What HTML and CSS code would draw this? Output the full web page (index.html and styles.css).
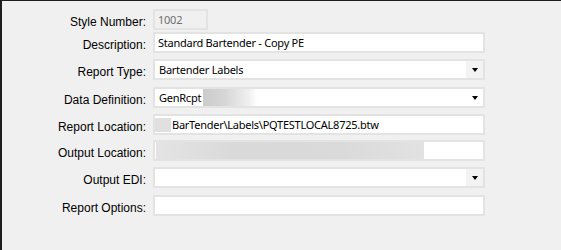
FILE: index.html
```html
<!DOCTYPE html>
<html lang="en">
<head>
  <meta charset="UTF-8" />
  <title>Report Setup</title>
  <link rel="stylesheet" href="styles.css">
</head>
<body>
  <div class="window">
    <div class="form">

      <div class="row row-style">
        <label class="label">Style Number:</label>
        <div class="field field-small field-disabled">1002</div>
      </div>

      <div class="row row-desc">
        <label class="label">Description:</label>
        <div class="field">Standard Bartender - Copy PE</div>
      </div>

      <div class="row row-type">
        <label class="label">Report Type:</label>
        <div class="field combo">
          <span class="combo-text">Bartender Labels</span>
          <span class="combo-btn shaded"><span class="arrow"></span></span>
        </div>
      </div>

      <div class="row row-data">
        <label class="label">Data Definition:</label>
        <div class="field combo">
          <span class="combo-text">GenRcpt<span class="blur blur-data"></span></span>
          <span class="combo-btn"><span class="arrow"></span></span>
        </div>
      </div>

      <div class="row row-loc">
        <label class="label">Report Location:</label>
        <div class="field field-loc"><span class="blur blur-loc"></span>BarTender\Labels\PQTESTLOCAL8725.btw</div>
      </div>

      <div class="row row-out">
        <label class="label">Output Location:</label>
        <div class="field field-out"><span class="blur blur-out"></span></div>
      </div>

      <div class="row row-edi">
        <label class="label">Output EDI:</label>
        <div class="field combo">
          <span class="combo-text"></span>
          <span class="combo-btn shaded"><span class="arrow"></span></span>
        </div>
      </div>

      <div class="row row-opts">
        <label class="label">Report Options:</label>
        <div class="field"></div>
      </div>

    </div>
  </div>
</body>
</html>
```

FILE: styles.css
```css
* {
  margin: 0;
  padding: 0;
  box-sizing: border-box;
}

body {
  background-color: #f0f0f0;
  width: 561px;
  height: 250px;
  overflow: hidden;
}

.window {
  height: 250px;
  border-top: 1px solid #1e1e1e;
  border-left: 2px solid #1e1e1e;
  background-color: #f0f0f0;
}

.form {
  padding-top: 8px;
}

.row {
  display: grid;
  grid-template-columns: 144px 332px;
  column-gap: 7px;
  align-items: center;
}

.row-desc { margin-top: 2px; }
.row-type { margin-top: 6px; }
.row-data { margin-top: 7px; }
.row-loc  { margin-top: 6px; }
.row-out  { margin-top: 5px; }
.row-edi  { margin-top: 6px; }
.row-opts { margin-top: 7px; }

.label {
  font-family: "Liberation Sans", Arial, sans-serif;
  font-size: 12px;
  color: #000;
  text-align: right;
  padding-top: 4px;
  white-space: nowrap;
}

.field {
  height: 21px;
  border: 2px solid #e3e3e3;
  background-color: #fff;
  font-family: "Noto Sans", sans-serif;
  font-size: 11px;
  letter-spacing: -0.25px;
  color: #000;
  line-height: 17px;
  padding-left: 3px;
  white-space: nowrap;
  overflow: hidden;
}

.field-small {
  width: 55px;
}

.field-disabled {
  background-color: #f0f0f0;
  color: #6d6d6d;
}

/* combo box */
.combo {
  display: flex;
  padding-left: 0;
}

.combo-text {
  flex: 1;
  padding-left: 4px;
  display: flex;
  align-items: center;
}

.combo-btn {
  width: 17px;
  display: flex;
  justify-content: center;
  align-items: center;
}

.combo-btn.shaded {
  background-color: #f3f3f3;
}

.arrow {
  width: 0;
  height: 0;
  border-left: 3.5px solid transparent;
  border-right: 3.5px solid transparent;
  border-top: 4px solid #000;
}

/* blurred (redacted) parts */
.blur {
  display: inline-block;
}

.blur-data {
  width: 54px;
  height: 17px;
  margin-left: 2px;
  background: linear-gradient(to right, #cbcbcb, #d6d6d6 40%, #f0f0f0 85%, #fff);
}

.field-loc {
  display: flex;
  align-items: center;
  padding-left: 0;
}

.blur-loc {
  width: 16px;
  height: 14px;
  margin-right: 1px;
  background-color: #e0e0e0;
}

.field-out {
  padding-left: 1px;
}

.blur-out {
  width: 268px;
  height: 17px;
  vertical-align: top;
  background: linear-gradient(to right, #e4e4e4, #d9d9d9 30%, #dadada 70%, #e2e2e2);
}
```
